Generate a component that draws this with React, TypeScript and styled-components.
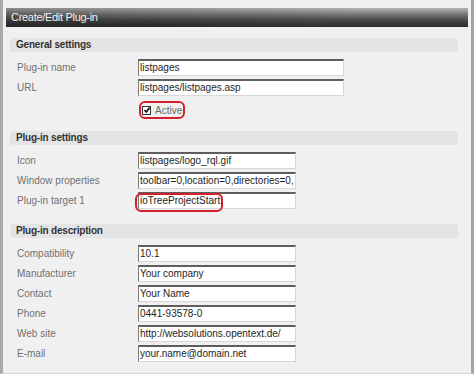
import styled, { createGlobalStyle } from "styled-components";

const GlobalStyle = createGlobalStyle`
  html, body {
    margin: 0;
    padding: 0;
    background: #ffffff;
  }
  body {
    font-family: "Liberation Sans", Arial, sans-serif;
  }
`;

type FieldRow = { label: string; value: string; mark?: boolean };

const general: FieldRow[] = [
  { label: "Plug-in name", value: "listpages" },
  { label: "URL", value: "listpages/listpages.asp" },
];

const settings: FieldRow[] = [
  { label: "Icon", value: "listpages/logo_rql.gif" },
  { label: "Window properties", value: "toolbar=0,location=0,directories=0,status=0" },
  { label: "Plug-in target 1", value: "ioTreeProjectStart", mark: true },
];

const description: FieldRow[] = [
  { label: "Compatibility", value: "10.1" },
  { label: "Manufacturer", value: "Your company" },
  { label: "Contact", value: "Your Name" },
  { label: "Phone", value: "0441-93578-0" },
  { label: "Web site", value: "http://websolutions.opentext.de/" },
  { label: "E-mail", value: "your.name@domain.net" },
];

const Rows = ({ rows, wide }: { rows: FieldRow[]; wide?: boolean }) => (
  <>
    {rows.map((r) => (
      <StyledRow key={r.label}>
        <StyledLabel>{r.label}</StyledLabel>
        <StyledField $wide={wide}>
          <StyledValue>{r.value}</StyledValue>
          {r.mark && <StyledMark />}
        </StyledField>
      </StyledRow>
    ))}
  </>
);

const App = () => {
  return (
    <>
      <GlobalStyle />
      <StyledFrame>
        <StyledTitleBar>Create/Edit Plug-in</StyledTitleBar>
        <StyledBody>
          <StyledSection>
            <StyledBand>General settings</StyledBand>
            <Rows rows={general} wide />
            <StyledRow>
              <span />
              <StyledCheckField>
                <StyledCheckbox>
                  <svg width="6" height="6" viewBox="0 0 6 6">
                    <path d="M0.5 3 L2.3 5 L5.6 0.6" fill="none" stroke="#111" strokeWidth="1.6" />
                  </svg>
                </StyledCheckbox>
                <StyledCheckText>Active</StyledCheckText>
              </StyledCheckField>
            </StyledRow>
          </StyledSection>
          <StyledSection>
            <StyledBand>Plug-in settings</StyledBand>
            <Rows rows={settings} />
          </StyledSection>
          <StyledSection>
            <StyledBand>Plug-in description</StyledBand>
            <Rows rows={description} />
          </StyledSection>
        </StyledBody>
      </StyledFrame>
    </>
  );
};

export default App;

const StyledFrame = styled.div`
  box-sizing: border-box;
  width: 474px;
  height: 374px;
  padding: 8px 3px 0;
  background: #f0f0f0;
  border-left: 3px solid #aaaaaa;
  border-right: 3px solid #a2a2a2;
  border-bottom: 1px solid #d6d6d6;
`;

const StyledTitleBar = styled.div`
  height: 19px;
  line-height: 19px;
  padding-left: 5px;
  font-size: 11px;
  letter-spacing: -0.3px;
  color: #f2f2f2;
  background: linear-gradient(to right, rgba(0, 0, 0, 0.22), rgba(0, 0, 0, 0) 75%),
    linear-gradient(#b4b4b4 0%, #7c7c7c 30%, #474747 65%, #2c2c2c 100%);
`;

const StyledBody = styled.div`
  display: flex;
  flex-direction: column;
  gap: 15px;
  padding: 11px 10px 0 4px;
`;

const StyledSection = styled.section`
  display: flex;
  flex-direction: column;
  gap: 3px;
`;

const StyledBand = styled.div`
  height: 14px;
  line-height: 14px;
  margin-bottom: 4px;
  padding-left: 6px;
  border-radius: 3px;
  background: #e4e4e4;
  font-size: 10px;
  font-weight: bold;
  letter-spacing: -0.2px;
  color: #333333;
`;

const StyledRow = styled.div`
  display: grid;
  grid-template-columns: 121px auto;
  align-items: center;
  height: 17px;
  padding-left: 7px;
`;

const StyledLabel = styled.span`
  font-size: 10px;
  color: #707070;
  white-space: nowrap;
`;

const StyledField = styled.div<{ $wide?: boolean }>`
  position: relative;
  box-sizing: border-box;
  width: ${({ $wide }) => ($wide ? "206px" : "158px")};
  height: 17px;
  padding: 0 2px 0 1px;
  background: #ffffff;
  border-top: 2px solid #5e5e5e;
  border-left: 1px solid #7a7a7a;
  border-right: 1px solid #d6d6d6;
  border-bottom: 1px solid #d6d6d6;
`;

const StyledValue = styled.span`
  display: block;
  overflow: hidden;
  white-space: nowrap;
  line-height: 14px;
  font-size: 10px;
  color: #1e1e1e;
`;

const StyledMark = styled.span`
  position: absolute;
  left: -4px;
  top: -1px;
  width: 84px;
  height: 15px;
  border: 2px solid #d4202c;
  border-radius: 6px;
`;

const StyledCheckField = styled.div`
  position: relative;
  display: inline-flex;
  align-items: center;
  justify-self: start;
  gap: 4px;
  height: 18px;
  margin: 2px 0 0 1px;
  padding: 0 1px 0 1px;
  border: 2px solid #d4202c;
  border-radius: 6px;
  box-sizing: border-box;
`;

const StyledCheckbox = styled.span`
  display: inline-flex;
  align-items: center;
  justify-content: center;
  box-sizing: border-box;
  width: 9px;
  height: 9px;
  background: #ffffff;
  border: 1px solid #333333;
`;

const StyledCheckText = styled.span`
  font-size: 10px;
  color: #6a6a6a;
`;
